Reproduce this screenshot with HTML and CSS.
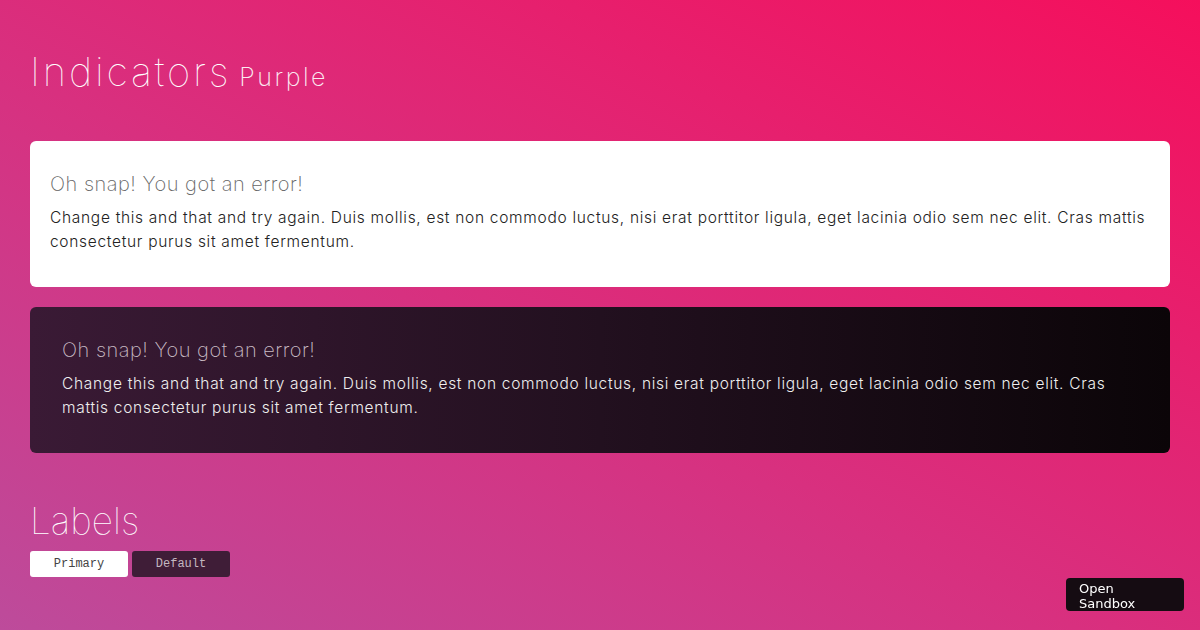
FILE: index.html
```html
<!DOCTYPE html>
<html lang="en">
<head>
<meta charset="utf-8">
<title>Indicators Purple</title>
<link rel="stylesheet" href="styles.css">
</head>
<body>
<main class="page">
  <h1 class="page-title">Indicators <small class="page-sub">Purple</small></h1>

  <section class="alert alert-light">
    <h4 class="alert-title">Oh snap! You got an error!</h4>
    <p class="alert-body">Change this and that and try again. Duis mollis, est non commodo luctus, nisi erat porttitor ligula, eget lacinia odio sem nec elit. Cras mattis consectetur purus sit amet fermentum.</p>
  </section>

  <section class="alert alert-dark">
    <h4 class="alert-title">Oh snap! You got an error!</h4>
    <p class="alert-body">Change this and that and try again. Duis mollis, est non commodo luctus, nisi erat porttitor ligula, eget lacinia odio sem nec elit. Cras mattis consectetur purus sit amet fermentum.</p>
  </section>

  <h2 class="section-title">Labels</h2>
  <div class="labels">
    <span class="label label-primary">Primary</span>
    <span class="label label-default">Default</span>
  </div>
</main>
<a class="sandbox-btn" href="#">Open Sandbox</a>
</body>
</html>
```

FILE: styles.css
```css
html, body {
  margin: 0;
  padding: 0;
  height: 100%;
}

body {
  background: linear-gradient(to top right, #bd4b9b 0%, #d8307f 45%, #f50f5c 100%);
  font-family: Inter, "Liberation Sans", sans-serif;
  color: #fff;
  overflow: hidden;
}

.page {
  padding: 48px 30px 0;
  display: flex;
  flex-direction: column;
}

.page-title {
  margin: 0 0 40px;
  font-size: 40px;
  line-height: 48px;
  font-weight: 100;
  letter-spacing: 2.8px;
  word-spacing: -6px;
}

.page-sub {
  font-size: 25px;
  font-weight: 200;
  letter-spacing: 2.5px;
  word-spacing: 0;
  opacity: 0.9;
}

.alert {
  border-radius: 6px;
  padding: 31px 20px 33px;
  margin-bottom: 20px;
}

.alert-light {
  background: #fff;
}

.alert-light .alert-title {
  color: #666;
}

.alert-light .alert-body {
  color: #222;
}

.alert-dark {
  padding: 31px 32px 33px;
  background: linear-gradient(to right, #3a1a35 0%, #22101f 50%, #0b0508 100%);
}

.alert-dark .alert-title {
  color: #c9bcc5;
}

.alert-dark .alert-body {
  color: #eee;
}

.alert-title {
  margin: 0 0 10px;
  font-size: 20px;
  line-height: 24px;
  font-weight: 200;
  letter-spacing: 0.5px;
}

.alert-body {
  margin: 0;
  font-size: 15.5px;
  line-height: 24px;
  font-weight: 300;
  letter-spacing: 0.7px;
}

.section-title {
  margin: 25px 0 7px;
  font-size: 37px;
  line-height: 46px;
  font-weight: 100;
  letter-spacing: 0;
}

.labels {
  display: flex;
  gap: 4px;
}

.label {
  display: flex;
  align-items: center;
  justify-content: center;
  width: 98px;
  height: 26px;
  border-radius: 3px;
  font-family: "Liberation Mono", monospace;
  font-size: 12px;
}

.label-primary {
  background: #fff;
  color: #444;
}

.label-default {
  background: #3f1d37;
  color: #c4b8c0;
}

.sandbox-btn {
  position: fixed;
  right: 16px;
  bottom: 19px;
  width: 92px;
  padding: 3px 13px 0;
  background: #150c12;
  color: #fff;
  border-radius: 4px;
  font-family: "DejaVu Sans", sans-serif;
  font-size: 13px;
  line-height: 15px;
  text-decoration: none;
}
```
